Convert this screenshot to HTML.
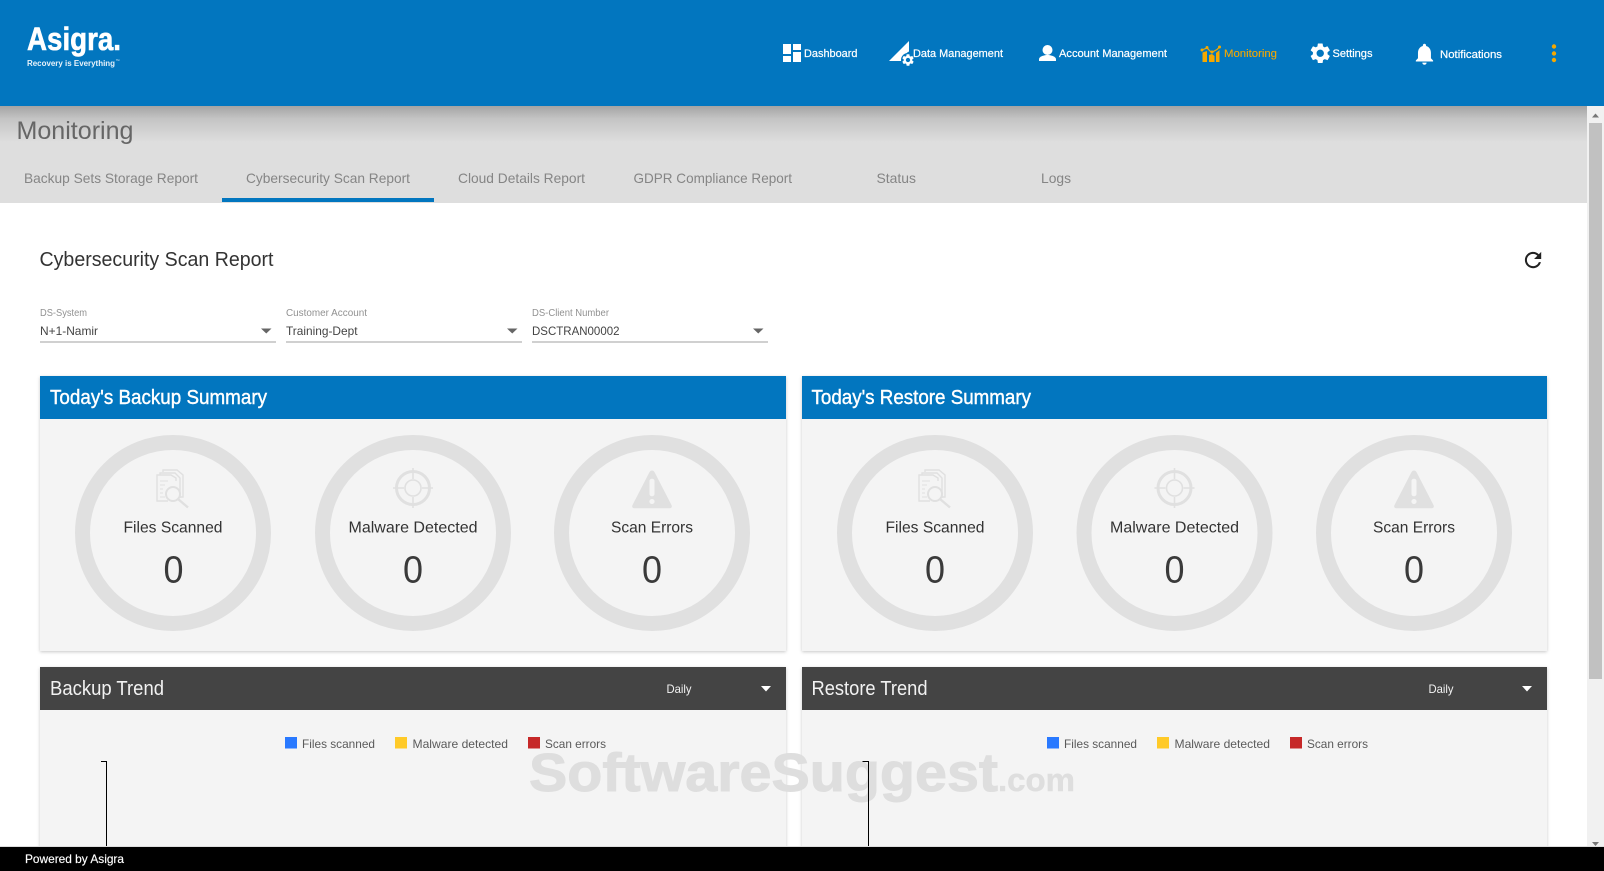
<!DOCTYPE html>
<html lang="en"><head><meta charset="utf-8"><title>Monitoring</title>
<style>
html,body{margin:0;padding:0;width:1604px;height:871px;overflow:hidden;background:#fff}
svg{display:block}
text{font-family:"Liberation Sans",sans-serif}
.nav{font-size:11px;fill:#fff;stroke:#fff;stroke-width:.2}
.tab{font-size:14px;fill:#858585}
.lab{font-size:10px;fill:#919191}
.val{font-size:12px;fill:#444}
.ch{font-size:20px;fill:#fff;stroke:#fff;stroke-width:.4}
.tt{font-size:20px;fill:#f2f2f2}
.cl{font-size:16px;fill:#333}
.num{font-size:38px;fill:#3a3a3a}
.lg{font-size:12px;fill:#5a5a5a}
.ic{fill:none;stroke:#e0e0e0}
</style></head><body>
<svg width="1604" height="871" viewBox="0 0 1604 871" xmlns="http://www.w3.org/2000/svg">
<defs>
<linearGradient id="sh" x1="0" y1="0" x2="0" y2="1"><stop offset="0" stop-color="#a4a4a4"/><stop offset=".35" stop-color="#c4c4c4"/><stop offset="1" stop-color="#dedede"/></linearGradient>
<filter id="cs" x="-2%" y="-2%" width="104%" height="104%"><feDropShadow dx="0" dy="1" stdDeviation="1.5" flood-color="#000" flood-opacity=".22"/></filter>
<path id="gear" fill-rule="evenodd" d="M19.14 12.94c.04-.3.06-.61.06-.94 0-.32-.02-.64-.07-.94l2.03-1.58c.18-.14.23-.41.12-.61l-1.92-3.32c-.12-.22-.37-.29-.59-.22l-2.39.96c-.5-.38-1.03-.7-1.62-.94l-.36-2.54c-.04-.24-.24-.41-.48-.41h-3.84c-.24 0-.43.17-.47.41l-.36 2.54c-.59.24-1.13.57-1.62.94l-2.39-.96c-.22-.08-.47 0-.59.22L2.74 8.87c-.12.21-.08.47.12.61l2.03 1.58c-.05.3-.09.63-.09.94s.02.64.07.94l-2.03 1.58c-.18.14-.23.41-.12.61l1.92 3.32c.12.22.37.29.59.22l2.39-.96c.5.38 1.03.7 1.62.94l.36 2.54c.05.24.24.41.48.41h3.84c.24 0 .44-.17.47-.41l.36-2.54c.59-.24 1.13-.56 1.62-.94l2.39.96c.22.08.47 0 .59-.22l1.92-3.32c.12-.22.07-.47-.12-.61l-2.01-1.58zM12 15.6c-1.98 0-3.6-1.62-3.6-3.6s1.62-3.6 3.6-3.6 3.6 1.62 3.6 3.6-1.62 3.6-3.6 3.6z"/>
<g id="files" class="ic" stroke-width="1.4">
<path d="M163 472v-2h14l6 5v22h-3"/><path d="M160 475v-2h15l5 5v20"/>
<path d="M176 481v-3l-5-3h-14v26h11"/>
<path d="M160 481h8M160 485h5M160 489h3M160 493h3M160 497h5" stroke-width="1"/>
<circle cx="173" cy="494" r="7" stroke-width="2"/><path d="M178 499l10 8.500" stroke-width="2.400"/>
</g>
<g id="target" class="ic">
<circle cx="413" cy="488" r="16.500" stroke-width="3"/><circle cx="413" cy="488" r="8" stroke-width="1.600"/>
<path d="M413 468v11M413 497v11M393 488h11M422 488h11" stroke-width="1.600"/>
</g>
<path id="warn" fill="#e0e0e0" fill-rule="evenodd" d="M652 470.500c1.200 0 2 .8 2.600 1.800l17 33c.7 1.500 0 2.900-1.700 2.900h-35.800c-1.700 0-2.400-1.400-1.700-2.900l17-33c.6-1 1.400-1.800 2.600-1.800zM649.500 481v13c0 1.300 1.100 2.300 2.500 2.300s2.500-1 2.500-2.300v-13c0-1.300-1.100-2.300-2.500-2.300s-2.500 1-2.500 2.300zM652 499c-1.500 0-2.600 1.100-2.600 2.500s1.100 2.500 2.600 2.500 2.600-1.100 2.600-2.500-1.100-2.500-2.600-2.500z"/>
</defs>

<rect width="1604" height="871" fill="#fff"/>

<!-- sub header -->
<rect x="0" y="106" width="1604" height="97" fill="#dedede"/>
<rect x="0" y="106" width="1604" height="36" fill="url(#sh)"/>
<text x="16.500" y="139" font-size="25" fill="#666" textLength="117" lengthAdjust="spacingAndGlyphs">Monitoring</text>
<text class="tab" x="24" y="183" textLength="174" lengthAdjust="spacingAndGlyphs">Backup Sets Storage Report</text>
<text class="tab" x="246" y="183" textLength="164" lengthAdjust="spacingAndGlyphs">Cybersecurity Scan Report</text>
<text class="tab" x="458" y="183" textLength="127" lengthAdjust="spacingAndGlyphs">Cloud Details Report</text>
<text class="tab" x="633.500" y="183" textLength="158.500" lengthAdjust="spacingAndGlyphs">GDPR Compliance Report</text>
<text class="tab" x="876.500" y="183" textLength="39.500" lengthAdjust="spacingAndGlyphs">Status</text>
<text class="tab" x="1041" y="183" textLength="30" lengthAdjust="spacingAndGlyphs">Logs</text>
<rect x="222" y="198" width="212" height="4" fill="#0276bf"/>

<!-- header -->
<rect x="0" y="0" width="1604" height="106" fill="#0276bf"/>
<text x="27" y="50" font-size="32" font-weight="700" fill="#fff" stroke="#fff" stroke-width=".6" textLength="94" lengthAdjust="spacingAndGlyphs">Asigra.</text>
<text x="27" y="66" font-size="8" font-weight="700" fill="#e8f2fa" textLength="88" lengthAdjust="spacingAndGlyphs">Recovery is Everything</text>
<text x="115.500" y="62" font-size="4" fill="#e8f2fa">™</text>

<g fill="#fff">
<rect x="783" y="44" width="8" height="10"/><rect x="783" y="56" width="8" height="6"/><rect x="793" y="44" width="8" height="6"/><rect x="793" y="52" width="8" height="10"/>
</g>
<text class="nav" x="804" y="57" textLength="53.500" lengthAdjust="spacingAndGlyphs">Dashboard</text>

<path d="M889 61 909 41v10.500c-3.500 1.500-5 5-5 9.500z" fill="#fff"/>
<circle cx="908" cy="60" r="7" fill="#0276bf"/>
<use href="#gear" transform="translate(900.800 52.800) scale(.6)" fill="#fff"/>
<text class="nav" x="913" y="57" textLength="90" lengthAdjust="spacingAndGlyphs">Data Management</text>

<circle cx="1047.500" cy="50" r="5" fill="#fff"/>
<path d="M1039 61v-1.800c0-2.900 5.600-4.200 8.500-4.200s8.500 1.300 8.500 4.200v1.800z" fill="#fff"/>
<text class="nav" x="1059" y="57" textLength="108" lengthAdjust="spacingAndGlyphs">Account Management</text>

<g fill="#f5a800">
<path d="M1202.500 52.500 1207 51v11h-4.500zM1209 55l3-1 2.500 2v6H1209zM1216 53l3.500-3v12h-3.500z"/>
<path d="M1202 50l5-2 4.500 4.500 5.500-3 3-3" fill="none" stroke="#f5a800" stroke-width="1.200"/>
<circle cx="1202" cy="50" r="1.500"/><circle cx="1207" cy="47.500" r="1.500"/><circle cx="1212" cy="52" r="1.500"/><circle cx="1219.500" cy="47" r="1.500"/>
</g>
<text x="1224" y="57" font-size="11" fill="#f5a800" stroke="#f5a800" stroke-width=".1" textLength="53" lengthAdjust="spacingAndGlyphs">Monitoring</text>

<use href="#gear" transform="translate(1308 41) scale(1.02)" fill="#fff"/>
<text class="nav" x="1332.500" y="57" textLength="40" lengthAdjust="spacingAndGlyphs">Settings</text>

<path transform="translate(1411.500 41) scale(1.080)" fill="#fff" d="M12 22c1.100 0 2-.9 2-2h-4c0 1.100.89 2 2 2zm6-6v-5c0-3.070-1.640-5.640-4.500-6.320V4c0-.83-.67-1.500-1.500-1.500s-1.500.67-1.500 1.500v.68C7.630 5.360 6 7.920 6 11v5l-2 2v1h16v-1l-2-2z"/>
<text class="nav" x="1440" y="58" textLength="62" lengthAdjust="spacingAndGlyphs">Notifications</text>

<g fill="#f5a800"><circle cx="1554" cy="46.500" r="2.200"/><circle cx="1554" cy="53.500" r="2.200"/><circle cx="1554" cy="60" r="2.200"/></g>

<!-- heading -->
<text x="39.500" y="266" font-size="20" fill="#333" textLength="234" lengthAdjust="spacingAndGlyphs">Cybersecurity Scan Report</text>
<path transform="translate(1520.800 247.800) scale(1.020)" fill="#222" d="M17.650 6.350C16.200 4.900 14.210 4 12 4c-4.420 0-7.990 3.580-7.990 8s3.570 8 7.990 8c3.730 0 6.840-2.550 7.730-6h-2.080c-.82 2.330-3.040 4-5.650 4-3.310 0-6-2.690-6-6s2.690-6 6-6c1.660 0 3.140.69 4.220 1.780L13 11h7V4l-2.350 2.350z"/>

<!-- filters -->
<text class="lab" x="40" y="316" textLength="47" lengthAdjust="spacingAndGlyphs">DS-System</text>
<text class="lab" x="286" y="316" textLength="81" lengthAdjust="spacingAndGlyphs">Customer Account</text>
<text class="lab" x="532" y="316" textLength="77" lengthAdjust="spacingAndGlyphs">DS-Client Number</text>
<text class="val" x="40" y="335" textLength="58" lengthAdjust="spacingAndGlyphs">N+1-Namir</text>
<text class="val" x="286" y="335" textLength="71.500" lengthAdjust="spacingAndGlyphs">Training-Dept</text>
<text class="val" x="532" y="335" textLength="87.500" lengthAdjust="spacingAndGlyphs">DSCTRAN00002</text>
<g fill="#666"><path d="M261 328.500h10.500l-5.250 5zM507 328.500h10.500l-5.250 5zM753 328.500h10.500l-5.250 5z"/></g>
<g fill="#a0a0a0"><rect x="40" y="341.500" width="236" height="1"/><rect x="286" y="341.500" width="236" height="1"/><rect x="532" y="341.500" width="236" height="1"/></g>

<!-- summary cards -->
<rect x="40" y="376" width="746" height="275" fill="#f4f4f4" filter="url(#cs)"/>
<rect x="802" y="376" width="745" height="275" fill="#f4f4f4" filter="url(#cs)"/>
<rect x="40" y="376" width="746" height="43" fill="#0276bf"/>
<rect x="802" y="376" width="745" height="43" fill="#0276bf"/>
<text class="ch" x="50" y="404" textLength="217" lengthAdjust="spacingAndGlyphs">Today's Backup Summary</text>
<text class="ch" x="811.500" y="404" textLength="219.500" lengthAdjust="spacingAndGlyphs">Today's Restore Summary</text>

<g fill="none" stroke="#e0e0e0" stroke-width="15">
<circle cx="173" cy="533" r="90.500"/><circle cx="413" cy="533" r="90.500"/><circle cx="652" cy="533" r="90.500"/>
<circle cx="935" cy="533" r="90.500"/><circle cx="1174.500" cy="533" r="90.500"/><circle cx="1414" cy="533" r="90.500"/>
</g>
<use href="#files"/><use href="#target"/><use href="#warn"/>
<use href="#files" x="762"/><use href="#target" x="761.500"/><use href="#warn" x="762"/>

<text class="cl" x="123.500" y="532.500" textLength="99" lengthAdjust="spacingAndGlyphs">Files Scanned</text>
<text class="cl" x="348.500" y="532.500" textLength="129" lengthAdjust="spacingAndGlyphs">Malware Detected</text>
<text class="cl" x="611" y="532.500" textLength="82" lengthAdjust="spacingAndGlyphs">Scan Errors</text>
<text class="cl" x="885.500" y="532.500" textLength="99" lengthAdjust="spacingAndGlyphs">Files Scanned</text>
<text class="cl" x="1110" y="532.500" textLength="129" lengthAdjust="spacingAndGlyphs">Malware Detected</text>
<text class="cl" x="1373" y="532.500" textLength="82" lengthAdjust="spacingAndGlyphs">Scan Errors</text>
<g>
<text class="num" x="163.500" y="582.500" textLength="20" lengthAdjust="spacingAndGlyphs">0</text>
<text class="num" x="403" y="582.500" textLength="20" lengthAdjust="spacingAndGlyphs">0</text>
<text class="num" x="642" y="582.500" textLength="20" lengthAdjust="spacingAndGlyphs">0</text>
<text class="num" x="925" y="582.500" textLength="20" lengthAdjust="spacingAndGlyphs">0</text>
<text class="num" x="1164.500" y="582.500" textLength="20" lengthAdjust="spacingAndGlyphs">0</text>
<text class="num" x="1404" y="582.500" textLength="20" lengthAdjust="spacingAndGlyphs">0</text>
</g>

<!-- trend cards -->
<rect x="40" y="667" width="746" height="190" fill="#f4f4f4" filter="url(#cs)"/>
<rect x="802" y="667" width="745" height="190" fill="#f4f4f4" filter="url(#cs)"/>
<rect x="40" y="667" width="746" height="43" fill="#444"/>
<rect x="802" y="667" width="745" height="43" fill="#444"/>
<text class="tt" x="50" y="695" textLength="114" lengthAdjust="spacingAndGlyphs">Backup Trend</text>
<text class="tt" x="811.500" y="695" textLength="116" lengthAdjust="spacingAndGlyphs">Restore Trend</text>
<text x="666.500" y="693" font-size="12" fill="#f2f2f2" textLength="25" lengthAdjust="spacingAndGlyphs">Daily</text>
<text x="1428.500" y="693" font-size="12" fill="#f2f2f2" textLength="25" lengthAdjust="spacingAndGlyphs">Daily</text>
<path d="M761 686h10l-5 5.500zM1522 686h10l-5 5.500z" fill="#fff"/>

<rect x="285" y="737" width="12" height="11.500" fill="#2979ff"/><rect x="395" y="737" width="12" height="11.500" fill="#ffca28"/><rect x="528" y="737" width="12" height="11.500" fill="#c62828"/>
<rect x="1047" y="737" width="12" height="11.500" fill="#2979ff"/><rect x="1157" y="737" width="12" height="11.500" fill="#ffca28"/><rect x="1290" y="737" width="12" height="11.500" fill="#c62828"/>
<text class="lg" x="302" y="748" textLength="73" lengthAdjust="spacingAndGlyphs">Files scanned</text>
<text class="lg" x="412.500" y="748" textLength="95.500" lengthAdjust="spacingAndGlyphs">Malware detected</text>
<text class="lg" x="545" y="748" textLength="61" lengthAdjust="spacingAndGlyphs">Scan errors</text>
<text class="lg" x="1064" y="748" textLength="73" lengthAdjust="spacingAndGlyphs">Files scanned</text>
<text class="lg" x="1174.500" y="748" textLength="95.500" lengthAdjust="spacingAndGlyphs">Malware detected</text>
<text class="lg" x="1307" y="748" textLength="61" lengthAdjust="spacingAndGlyphs">Scan errors</text>

<!-- watermark -->
<text x="529" y="791" font-size="54" font-weight="700" fill="#dedede" stroke="#dedede" stroke-width="1" textLength="469" lengthAdjust="spacingAndGlyphs">SoftwareSuggest</text>
<text x="998" y="791" font-size="32" font-weight="700" fill="#dedede" stroke="#dedede" stroke-width=".5" textLength="77" lengthAdjust="spacingAndGlyphs">.com</text>

<path d="M101 761.500h5.500V847M862.500 761.500h6V847" fill="none" stroke="#000" stroke-width="1"/>

<!-- scrollbar -->
<rect x="1587" y="106" width="17" height="741" fill="#f1f1f1"/>
<rect x="1589" y="123" width="13" height="556" fill="#c1c1c1"/>
<path d="M1592 117.500h7l-3.500-4zM1592 842h7l-3.500 4z" fill="#777"/>

<!-- footer -->
<rect x="0" y="846" width="1604" height="1" fill="#ddd"/>
<rect x="0" y="847" width="1604" height="24" fill="#000"/>
<text x="25" y="863" font-size="12" fill="#fff" stroke="#fff" stroke-width=".15" textLength="99" lengthAdjust="spacingAndGlyphs">Powered by Asigra</text>
</svg>
</body></html>
